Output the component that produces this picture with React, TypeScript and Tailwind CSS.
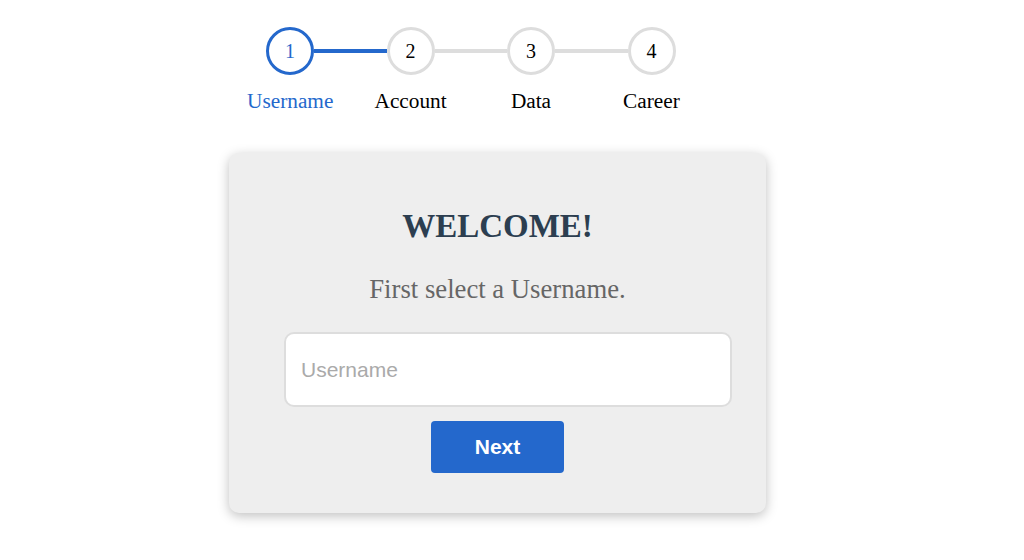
import React from "react";

const serif = { fontFamily: '"Liberation Serif", "Times New Roman", serif' };
const sans = { fontFamily: '"Liberation Sans", Arial, sans-serif' };

const steps = ["Username", "Account", "Data", "Career"];

export default function App() {
  return (
    <div className="w-[1024px] h-[560px] bg-white overflow-hidden" style={serif}>
      <div className="pl-[230px] pt-[27px]">
        {/* stepper circles */}
        <div className="flex items-center pl-[36px]">
          {steps.map((_, i) => (
            <React.Fragment key={i}>
              <div
                className={`w-[48px] h-[48px] rounded-full border-[3px] bg-white flex items-center justify-center text-[20px] leading-none ${
                  i === 0 ? "border-[#2468cc] text-[#2468cc]" : "border-[#dddddd] text-black"
                }`}
              >
                {i + 1}
              </div>
              {i < steps.length - 1 && (
                <div className={`w-[72.5px] h-[4px] ${i === 0 ? "bg-[#2468cc]" : "bg-[#dddddd]"}`} />
              )}
            </React.Fragment>
          ))}
        </div>
        {/* labels */}
        <div className="flex mt-[14px]">
          {steps.map((s, i) => (
            <div
              key={s}
              className={`w-[120.4px] text-center text-[21.3px] leading-[24px] ${i === 0 ? "text-[#2468cc]" : "text-black"}`}
            >
              {s}
            </div>
          ))}
        </div>

        {/* card */}
        <div className="mt-[40px] w-[537px] rounded-[10px] bg-[#eeeeee] shadow-[0_3px_12px_rgba(0,0,0,0.25)] pt-[53px] pb-[40px] -ml-[1px]">
          <h1 className="text-center text-[33px] leading-[40px] font-bold text-[#2c3e50]">WELCOME!</h1>
          <p className="text-center text-[26.7px] leading-[32px] text-[#666666] mt-[27px]">First select a Username.</p>
          <div className="ml-[55px] mt-[27px] w-[448px] h-[75px] rounded-[10px] border-2 border-[#dddddd] bg-white flex items-center px-[15px]">
            <input
              placeholder="Username"
              className="w-full outline-none bg-transparent text-[21px] text-black placeholder:text-[#aaaaaa]"
              style={sans}
            />
          </div>
          <div className="flex justify-center mt-[14px]">
            <button
              className="w-[133px] h-[52px] rounded-[4px] bg-[#2468cc] text-white font-bold text-[21px]"
              style={sans}
            >
              Next
            </button>
          </div>
        </div>
      </div>
    </div>
  );
}
